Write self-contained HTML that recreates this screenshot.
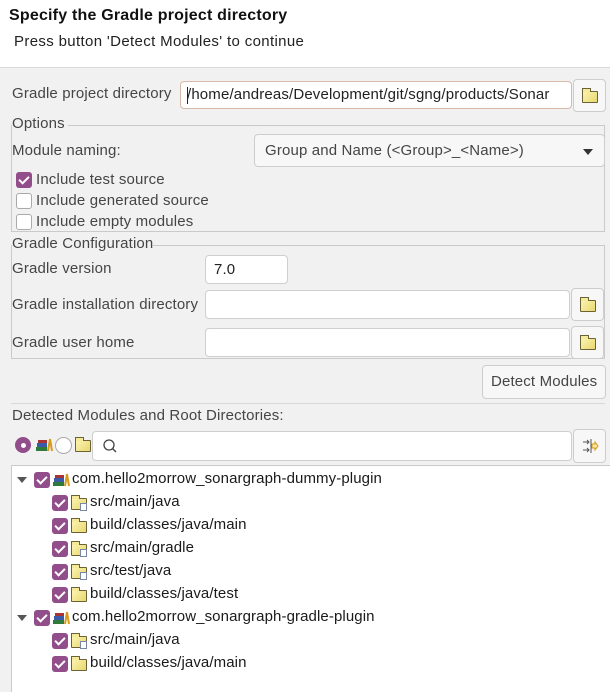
<!DOCTYPE html>
<html><head><meta charset="utf-8"><style>
*{box-sizing:border-box;margin:0;padding:0}
body{width:610px;height:692px;overflow:hidden;background:#f1f1f1;font-family:"Liberation Sans","DejaVu Sans",sans-serif;font-size:15px;letter-spacing:0.15px;color:#454545;position:relative}
.a{position:absolute;white-space:nowrap}
.in{position:absolute;background:#fff;border:1px solid #cfcfcf;border-radius:4px}
.btn{position:absolute;background:#f7f7f7;border:1px solid #cdcdcd;border-radius:4px}
.fold{position:absolute;width:16px;height:12px;background:linear-gradient(135deg,#fbf3b0,#e8d770);border:1px solid #6b6235;border-radius:1px}
.fold:before{content:"";position:absolute;left:-1px;top:-4px;width:7px;height:3px;border:1px solid #6b6235;border-bottom:none;background:#f5ea9a}
.cb{position:absolute;width:16px;height:16px;border-radius:3px;background:#924d8b}
.cb:after{content:"";position:absolute;left:5px;top:2px;width:4px;height:8px;border:solid #fff;border-width:0 2px 2px 0;transform:rotate(45deg)}
.ucb{position:absolute;width:16px;height:16px;border-radius:3px;background:#fff;border:1px solid #aaa}
.grp{position:absolute;border:1px solid #cacaca}
.t{position:absolute;white-space:nowrap;color:#1a1a1a;font-size:15px;letter-spacing:0.1px}
.doc{position:absolute;width:7px;height:8px;background:#fff;border:1px solid #7a86a8}
</style></head><body>
<div class="a" style="left:0;top:0;width:610px;height:68px;background:#fff;border-bottom:1px solid #d9d9d9"></div>
<div class="a" style="left:9px;top:7px;font-weight:bold;font-size:16px;color:#111;letter-spacing:0.2px">Specify the Gradle project directory</div>
<div class="a" style="left:14px;top:33px;color:#222;letter-spacing:0.35px">Press button 'Detect Modules' to continue</div>

<div class="a" style="left:12px;top:85px">Gradle project directory</div>
<div class="in" style="left:180px;top:81px;width:392px;height:28px;border-color:#d8b8a8;overflow:hidden"><span class="a" style="left:6px;top:4px;color:#222">/home/andreas/Development/git/sgng/products/Sonar</span><span class="a" style="left:6px;top:5px;width:1px;height:17px;background:#222"></span></div>
<div class="btn" style="left:573px;top:79px;width:33px;height:33px"><div class="fold" style="left:8px;top:11px"></div></div>

<div class="grp" style="left:11px;top:125px;width:594px;height:107px;border-top:none"></div>
<div class="a" style="left:68px;top:125px;width:537px;height:1px;background:#cacaca"></div>
<div class="a" style="left:12px;top:115px;background:#f1f1f1">Options</div>
<div class="a" style="left:12px;top:142px">Module naming:</div>
<div class="btn" style="left:254px;top:134px;width:351px;height:33px"><span class="a" style="left:10px;top:7px">Group and Name (&lt;Group&gt;_&lt;Name&gt;)</span><span class="a" style="right:11px;top:14px;border:5px solid transparent;border-top:6px solid #333;border-bottom:none"></span></div>
<div class="cb" style="left:16px;top:172px"></div><div class="a" style="left:36px;top:171px">Include test source</div>
<div class="ucb" style="left:16px;top:193px"></div><div class="a" style="left:36px;top:192px">Include generated source</div>
<div class="ucb" style="left:16px;top:214px"></div><div class="a" style="left:36px;top:213px">Include empty modules</div>

<div class="grp" style="left:11px;top:245px;width:594px;height:114px;border-top:none"></div>
<div class="a" style="left:152px;top:245px;width:453px;height:1px;background:#cacaca"></div>
<div class="a" style="left:12px;top:235px;background:#f1f1f1">Gradle Configuration</div>
<div class="a" style="left:12px;top:260px">Gradle version</div>
<div class="in" style="left:205px;top:255px;width:83px;height:29px"><span class="a" style="left:8px;top:5px;color:#222">7.0</span></div>
<div class="a" style="left:12px;top:296px">Gradle installation directory</div>
<div class="in" style="left:205px;top:290px;width:365px;height:29px"></div>
<div class="btn" style="left:571px;top:288px;width:33px;height:33px"><div class="fold" style="left:8px;top:11px"></div></div>
<div class="a" style="left:12px;top:334px">Gradle user home</div>
<div class="in" style="left:205px;top:328px;width:365px;height:29px"></div>
<div class="btn" style="left:571px;top:326px;width:33px;height:33px"><div class="fold" style="left:8px;top:11px"></div></div>

<div class="btn" style="left:482px;top:365px;width:124px;height:34px"><span class="a" style="left:8px;top:7px">Detect Modules</span></div>
<div class="a" style="left:11px;top:403px;width:594px;height:1px;background:#d8d8d8"></div>
<div class="a" style="left:12px;top:407px">Detected Modules and Root Directories:</div>

<div class="a" style="left:15px;top:437px;width:16px;height:16px;border-radius:50%;background:#924d8b"></div>
<div class="a" style="left:21px;top:443px;width:5px;height:5px;border-radius:50%;background:#fff"></div>
<svg class="a" style="left:36px;top:438px" width="17" height="14" viewBox="0 0 17 14"><rect x="0" y="9" width="11" height="4" fill="#2d7a3a"/><rect x="1" y="5" width="10" height="4" fill="#3b5aa8"/><rect x="2" y="2" width="9" height="3" fill="#a33"/><path d="M12 13 L14 1 L16 13" stroke="#d79a1a" stroke-width="2" fill="none"/></svg>
<div class="a" style="left:55px;top:437px;width:17px;height:17px;border-radius:50%;background:#fff;border:1px solid #aaa"></div>
<div class="fold" style="left:75px;top:440px"></div>
<div class="in" style="left:92px;top:431px;width:480px;height:30px"><svg class="a" style="left:10px;top:7px" width="14" height="15"><circle cx="6" cy="6" r="5" stroke="#444" stroke-width="1.3" fill="none"/><path d="M9.5 9.5 L13 13" stroke="#444" stroke-width="1.4"/></svg></div>
<div class="btn" style="left:573px;top:429px;width:33px;height:34px"><svg class="a" style="left:8px;top:8px" width="17" height="16"><path d="M1 4h6M5 2l2 2-2 2M9 1v7M1 12h6M5 10l2 2-2 2M9 8v7" stroke="#555" fill="none"/><path d="M10 6h3V4l3 4-3 4V10h-3z" stroke="#d79a1a" fill="#fbe9a0"/></svg></div>

<div class="a" style="left:11px;top:465px;width:599px;height:227px;background:#fff;border:1px solid #cacaca;border-right:none;border-bottom:none"></div>

<div class="a" style="left:17px;top:477px;border:5px solid transparent;border-top:6px solid #555;border-bottom:none"></div>
<div class="cb" style="left:34px;top:472px"></div>
<svg class="a" style="left:53px;top:473px" width="17" height="14" viewBox="0 0 17 14"><rect x="0" y="9" width="11" height="4" fill="#2d7a3a"/><rect x="1" y="5" width="10" height="4" fill="#3b5aa8"/><rect x="2" y="2" width="9" height="3" fill="#a33"/><path d="M12 13 L14 1 L16 13" stroke="#d79a1a" stroke-width="2" fill="none"/></svg>
<div class="t" style="left:72px;top:470px">com.hello2morrow_sonargraph-dummy-plugin</div>

<div class="cb" style="left:52px;top:495px"></div><div class="fold" style="left:71px;top:498px"></div><div class="doc" style="left:80px;top:503px"></div><div class="t" style="left:90px;top:493px">src/main/java</div>
<div class="cb" style="left:52px;top:518px"></div><div class="fold" style="left:71px;top:521px"></div><div class="t" style="left:90px;top:516px">build/classes/java/main</div>
<div class="cb" style="left:52px;top:541px"></div><div class="fold" style="left:71px;top:544px"></div><div class="doc" style="left:80px;top:549px"></div><div class="t" style="left:90px;top:539px">src/main/gradle</div>
<div class="cb" style="left:52px;top:564px"></div><div class="fold" style="left:71px;top:567px"></div><div class="doc" style="left:80px;top:572px"></div><div class="t" style="left:90px;top:562px">src/test/java</div>
<div class="cb" style="left:52px;top:587px"></div><div class="fold" style="left:71px;top:590px"></div><div class="t" style="left:90px;top:585px">build/classes/java/test</div>

<div class="a" style="left:17px;top:615px;border:5px solid transparent;border-top:6px solid #555;border-bottom:none"></div>
<div class="cb" style="left:34px;top:610px"></div>
<svg class="a" style="left:53px;top:611px" width="17" height="14" viewBox="0 0 17 14"><rect x="0" y="9" width="11" height="4" fill="#2d7a3a"/><rect x="1" y="5" width="10" height="4" fill="#3b5aa8"/><rect x="2" y="2" width="9" height="3" fill="#a33"/><path d="M12 13 L14 1 L16 13" stroke="#d79a1a" stroke-width="2" fill="none"/></svg>
<div class="t" style="left:72px;top:608px">com.hello2morrow_sonargraph-gradle-plugin</div>
<div class="cb" style="left:52px;top:633px"></div><div class="fold" style="left:71px;top:636px"></div><div class="doc" style="left:80px;top:641px"></div><div class="t" style="left:90px;top:631px">src/main/java</div>
<div class="cb" style="left:52px;top:656px"></div><div class="fold" style="left:71px;top:659px"></div><div class="t" style="left:90px;top:654px">build/classes/java/main</div>
</body></html>
